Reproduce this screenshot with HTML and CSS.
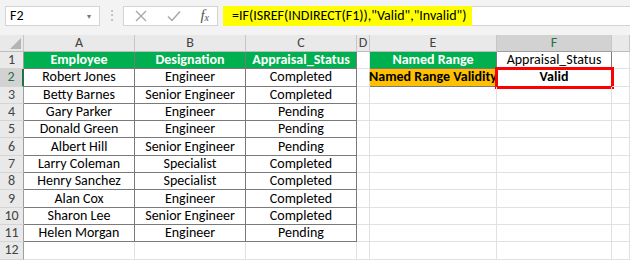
FILE: index.html
```html
<!DOCTYPE html>
<html lang="en">
<head>
  <meta charset="UTF-8">
  <title>Named Range Validity</title>
  <link rel="stylesheet" href="styles.css">
</head>
<body>
  <div class="toolbar">
    <div class="name-box">
      <span>F2</span>
      <span class="caret">&#9662;</span>
    </div>
    <div class="grip">&#8942;</div>
    <div class="fx-buttons">
      <svg class="btn-icon" width="14" height="14" viewBox="0 0 14 14"><path d="M2 2 L12 12 M12 2 L2 12" stroke="#a6a6a6" stroke-width="1.3" fill="none"/></svg>
      <svg class="btn-icon" width="16" height="14" viewBox="0 0 16 14"><path d="M2 7.5 L6 11.5 L14 2.5" stroke="#a6a6a6" stroke-width="1.5" fill="none"/></svg>
      <span class="fx">f<sub>x</sub></span>
    </div>
    <div class="formula">
      <span class="formula-text">=IF(ISREF(INDIRECT(F1)),"Valid","Invalid")</span>
    </div>
  </div>

  <div class="sheet">
    <!-- column headers -->
    <div class="corner"><span class="tri"></span></div>
    <div class="col-head">A</div>
    <div class="col-head">B</div>
    <div class="col-head">C</div>
    <div class="col-head">D</div>
    <div class="col-head">E</div>
    <div class="col-head active">F</div>
    <div class="col-head"></div>

    <div class="row-head">1</div>
    <div class="cell t head">Employee</div>
    <div class="cell t head">Designation</div>
    <div class="cell t head">Appraisal_Status</div>
    <div class="cell"></div>
    <div class="cell e head">Named Range</div>
    <div class="cell e plain">Appraisal_Status</div>
    <div class="cell"></div>

    <div class="row-head active">2</div>
    <div class="cell t">Robert Jones</div>
    <div class="cell t">Engineer</div>
    <div class="cell t">Completed</div>
    <div class="cell"></div>
    <div class="cell e label">Named Range Validity</div>
    <div class="cell e result">Valid</div>
    <div class="cell"></div>

    <div class="row-head">3</div>
    <div class="cell t">Betty Barnes</div>
    <div class="cell t">Senior Engineer</div>
    <div class="cell t">Completed</div>
    <div class="cell"></div><div class="cell"></div><div class="cell"></div><div class="cell"></div>

    <div class="row-head">4</div>
    <div class="cell t">Gary Parker</div>
    <div class="cell t">Engineer</div>
    <div class="cell t">Pending</div>
    <div class="cell"></div><div class="cell"></div><div class="cell"></div><div class="cell"></div>

    <div class="row-head">5</div>
    <div class="cell t">Donald Green</div>
    <div class="cell t">Engineer</div>
    <div class="cell t">Pending</div>
    <div class="cell"></div><div class="cell"></div><div class="cell"></div><div class="cell"></div>

    <div class="row-head">6</div>
    <div class="cell t">Albert Hill</div>
    <div class="cell t">Senior Engineer</div>
    <div class="cell t">Pending</div>
    <div class="cell"></div><div class="cell"></div><div class="cell"></div><div class="cell"></div>

    <div class="row-head">7</div>
    <div class="cell t">Larry Coleman</div>
    <div class="cell t">Specialist</div>
    <div class="cell t">Completed</div>
    <div class="cell"></div><div class="cell"></div><div class="cell"></div><div class="cell"></div>

    <div class="row-head">8</div>
    <div class="cell t">Henry Sanchez</div>
    <div class="cell t">Specialist</div>
    <div class="cell t">Completed</div>
    <div class="cell"></div><div class="cell"></div><div class="cell"></div><div class="cell"></div>

    <div class="row-head">9</div>
    <div class="cell t">Alan Cox</div>
    <div class="cell t">Engineer</div>
    <div class="cell t">Completed</div>
    <div class="cell"></div><div class="cell"></div><div class="cell"></div><div class="cell"></div>

    <div class="row-head">10</div>
    <div class="cell t">Sharon Lee</div>
    <div class="cell t">Senior Engineer</div>
    <div class="cell t">Completed</div>
    <div class="cell"></div><div class="cell"></div><div class="cell"></div><div class="cell"></div>

    <div class="row-head">11</div>
    <div class="cell t">Helen Morgan</div>
    <div class="cell t">Engineer</div>
    <div class="cell t">Pending</div>
    <div class="cell"></div><div class="cell"></div><div class="cell"></div><div class="cell"></div>

    <div class="row-head">12</div>
    <div class="cell"></div><div class="cell"></div><div class="cell"></div>
    <div class="cell"></div><div class="cell"></div><div class="cell"></div><div class="cell"></div>
  </div>
</body>
</html>
```

FILE: styles.css
```css
body {
  margin: 0;
  width: 630px;
  height: 260px;
  overflow: hidden;
  background-color: #f3f3f3;
  font-family: Carlito, Lato, "Open Sans", sans-serif;
  color: #000;
}

/* formula bar */
.toolbar {
  display: flex;
  align-items: center;
  height: 35px;
  padding: 0 0 0 5px;
  box-sizing: border-box;
}

.name-box {
  width: 95px;
  height: 20px;
  margin-bottom: 4px;
  background-color: #fff;
  border: 1px solid #d4d4d4;
  box-sizing: border-box;
  display: flex;
  align-items: center;
  justify-content: space-between;
  padding: 0 8px 0 4px;
  font-size: 14px;
}

.caret {
  font-size: 8px;
  color: #777;
}

.grip {
  width: 23px;
  text-align: center;
  color: #b5b5b5;
  font-size: 14px;
  margin-bottom: 4px;
}

.fx-buttons {
  width: 95px;
  height: 20px;
  margin-bottom: 4px;
  background-color: #fff;
  border: 1px solid #d4d4d4;
  box-sizing: border-box;
  display: flex;
  align-items: center;
  justify-content: space-between;
  padding: 0 8px 0 10px;
}

.fx {
  font-family: "Liberation Serif", serif;
  font-style: italic;
  font-size: 15px;
  color: #555;
}

.fx sub {
  font-size: 10px;
  vertical-align: -1px;
}

.formula {
  flex: 1;
  height: 20px;
  margin-left: 5px;
  margin-bottom: 4px;
  background-color: #fff;
  border-top: 1px solid #d4d4d4;
  border-bottom: 1px solid #d4d4d4;
  box-sizing: border-box;
  display: flex;
  align-items: stretch;
}

.formula-text {
  background-color: #ffff00;
  padding: 0 6px 0 9px;
  font-size: 14px;
  line-height: 19px;
  margin-top: -1px;
  margin-bottom: -1px;
}

/* sheet grid */
.sheet {
  display: grid;
  grid-template-columns: 24px 111px 111px 111px 13px 127px 115px 18px;
  grid-template-rows: 17px repeat(12, 17.3px);
  background-color: #fff;
  font-size: 14px;
}

.corner,
.col-head,
.row-head {
  background-color: #e9e9e9;
  color: #444;
  border-right: 1px solid #c6c6c6;
  border-bottom: 1px solid #bdbdbd;
  box-sizing: border-box;
  display: flex;
  align-items: center;
  justify-content: center;
  line-height: 1;
}

.corner {
  position: relative;
}

.tri {
  position: absolute;
  right: 2px;
  bottom: 2px;
  width: 0;
  height: 0;
  border-left: 11px solid transparent;
  border-bottom: 11px solid #b4b4b4;
}

.row-head {
  border-bottom-color: #d4d4d4;
  border-right-color: #9e9e9e;
}

.col-head.active {
  background-color: #d2d2d2;
  color: #217346;
  border-bottom: 1px solid #9e9e9e;
}

.row-head.active {
  background-color: #d2d2d2;
  color: #217346;
  border-right: 2px solid #217346;
}

.cell {
  border-right: 1px solid #e1e1e1;
  border-bottom: 1px solid #e1e1e1;
  box-sizing: border-box;
  display: flex;
  align-items: center;
  justify-content: center;
  white-space: nowrap;
  line-height: 1;
}

.cell.t,
.cell.e {
  border-right-color: #7a7a7a;
  border-bottom-color: #7a7a7a;
}

.cell.head {
  background-color: #00b050;
  color: #fff;
  font-weight: bold;
}

.cell.label {
  background-color: #ffc000;
  font-weight: bold;
}

.cell.result {
  font-weight: bold;
  outline: 3px solid #ff0000;
  outline-offset: -1px;
}
```
